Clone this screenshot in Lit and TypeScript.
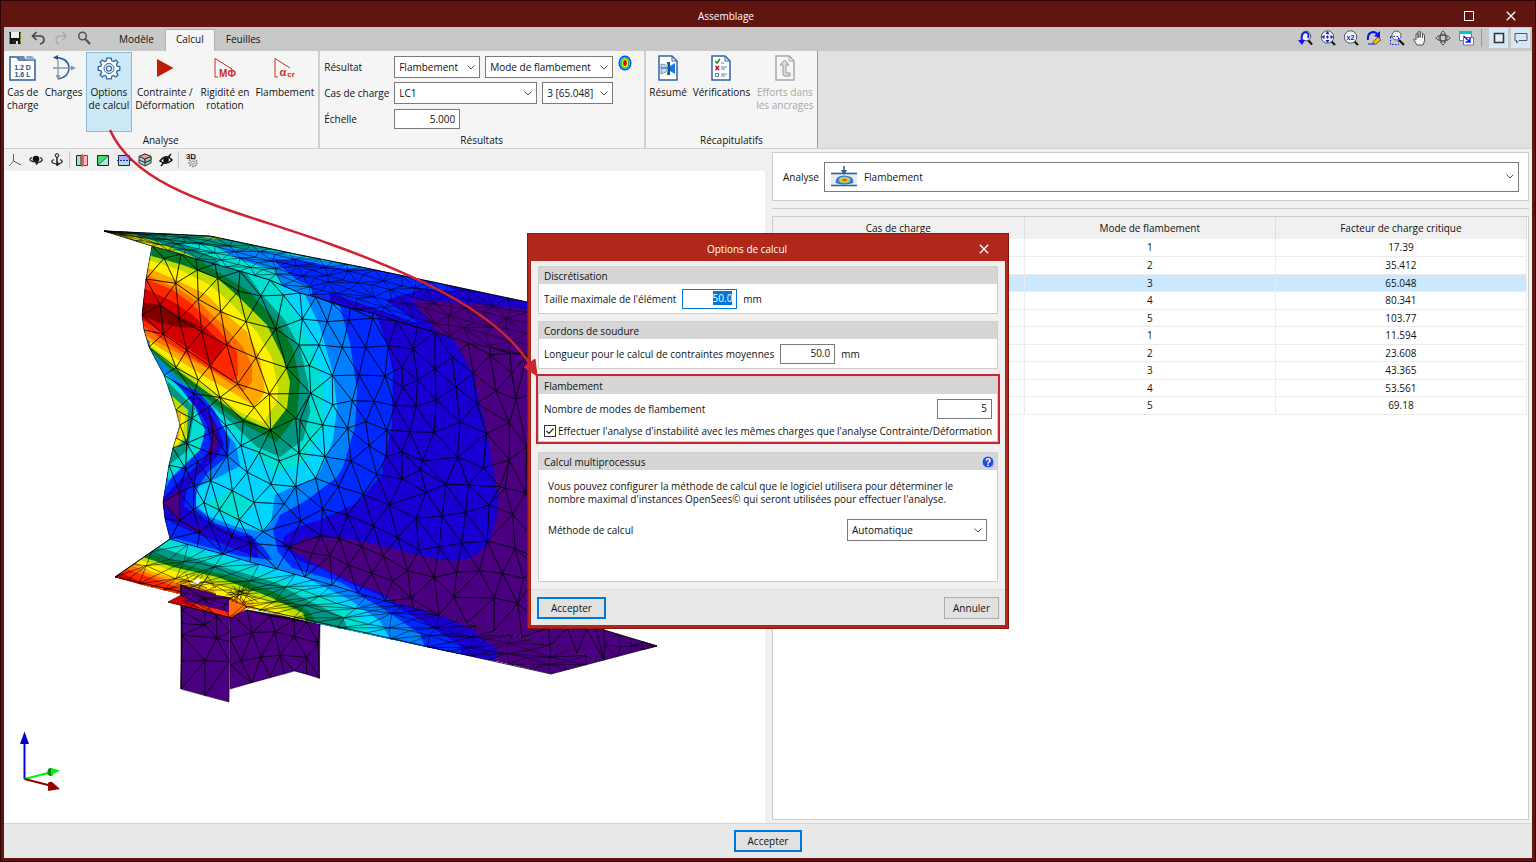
import { LitElement, html, svg, css } from "lit";
import { customElement, property } from "lit/decorators.js";
import { classMap } from "lit/directives/class-map.js";

type P = [number, number];

/* ---------- mesh geometry ---------- */

const C = {
  violet: "#4b0082", navy: "#1900d2", blue: "#0028ff", azure: "#0080ff", sky: "#00d4ff",
  turq: "#00e0d2", teal: "#009682", green: "#007828", lime: "#bedc00", yellow: "#fff000",
  amber: "#ffa800", orange: "#ff6e00", red: "#ff2800", crimson: "#d20000", maroon: "#820000",
};

/** Reads "x,y x,y ..." given in thirds of a unit from an origin. */
const patch = (ox: number, oy: number, s: string): P[] =>
  s.trim().split(/\s+/).map((t) => {
    const [x, y] = t.split(",").map(Number);
    return [ox + x / 3, oy + y / 3] as P;
  });
const pts = (s: string): P[] => s.trim().split(/\s+/).map((t) => t.split(",").map(Number) as P);

const inside = (x: number, y: number, poly: P[]) => {
  let hit = false;
  for (let i = 0, j = poly.length - 1; i < poly.length; j = i++) {
    const [xi, yi] = poly[i], [xj, yj] = poly[j];
    if (yi > y !== yj > y && x < ((xj - xi) * (y - yi)) / (yj - yi) + xi) hit = !hit;
  }
  return hit;
};

/** Delaunay triangulation (Bowyer-Watson), kept where the centroid lies in the outline. */
function triangulate(nodes: P[], outline: P[]): string {
  const p: P[] = [];
  for (const n of [...outline, ...nodes])
    if (!p.some((q) => Math.hypot(q[0] - n[0], q[1] - n[1]) < 4)) p.push(n);
  const n = p.length;
  p.push([-9000, -9000], [9000, -9000], [300, 18000]);
  const make = (a: number, b: number, c: number) => {
    const [ax, ay] = p[a], [bx, by] = p[b], [cx, cy] = p[c];
    const d = 2 * (ax * (by - cy) + bx * (cy - ay) + cx * (ay - by)) || 1e-9;
    const A = ax * ax + ay * ay, B = bx * bx + by * by, D = cx * cx + cy * cy;
    const x = (A * (by - cy) + B * (cy - ay) + D * (ay - by)) / d;
    const y = (A * (cx - bx) + B * (ax - cx) + D * (bx - ax)) / d;
    return { v: [a, b, c], x, y, r: (ax - x) ** 2 + (ay - y) ** 2 };
  };
  let tris = [make(n, n + 1, n + 2)];
  for (let i = 0; i < n; i++) {
    const edges = new Map<string, number[]>();
    tris = tris.filter((t) => {
      if ((p[i][0] - t.x) ** 2 + (p[i][1] - t.y) ** 2 >= t.r) return true;
      for (let k = 0; k < 3; k++) {
        const e = [t.v[k], t.v[(k + 1) % 3]].sort((u, w) => u - w);
        const key = e.join();
        if (edges.has(key)) edges.delete(key);
        else edges.set(key, e);
      }
      return false;
    });
    for (const [a, b] of edges.values()) tris.push(make(a, b, i));
  }
  let d = "";
  for (const t of tris) {
    if (t.v.some((v) => v >= n)) continue;
    const [a, b, c] = t.v.map((v) => p[v]);
    if (!inside((a[0] + b[0] + c[0]) / 3, (a[1] + b[1] + c[1]) / 3, outline)) continue;
    d += "M" + [a, b, c].map((q) => q[0].toFixed(1) + " " + q[1].toFixed(1)).join("L") + "Z";
  }
  return d;
}

/** Zigzag mesh between an upper and a lower polyline. */
function strip(top: P[], bottom: P[], rows: number, cols: number): string {
  const at = (line: P[], t: number): P => {
    const f = Math.min(t, 0.99999) * (line.length - 1), i = Math.floor(f), k = f - i;
    return [line[i][0] + (line[i + 1][0] - line[i][0]) * k, line[i][1] + (line[i + 1][1] - line[i][1]) * k];
  };
  const g: P[][] = [];
  for (let r = 0; r <= rows; r++) {
    const row: P[] = [];
    for (let c = 0; c <= cols; c++) {
      const wob = r > 0 && r < rows && c > 0 && c < cols ? Math.sin(c * 5.1 + r * 2.7) * 0.3 : 0;
      const t = Math.min(1, Math.max(0, (c + wob) / cols));
      const a = at(top, t), b = at(bottom, t), k = (r + wob * 0.5) / rows;
      row.push([a[0] + (b[0] - a[0]) * k, a[1] + (b[1] - a[1]) * k]);
    }
    g.push(row);
  }
  const seg = (a: P, b: P) => `M${a[0].toFixed(1)} ${a[1].toFixed(1)}L${b[0].toFixed(1)} ${b[1].toFixed(1)}`;
  let d = "";
  for (let r = 0; r < rows; r++)
    for (let c = 0; c < cols; c++) {
      d += seg(g[r][c], g[r][c + 1]) + seg(g[r][c], g[r + 1][c]);
      d += (r + c) % 2 ? seg(g[r][c], g[r + 1][c + 1]) : seg(g[r][c + 1], g[r + 1][c]);
    }
  return d;
}

const webTop = pts(`152,246 181,254 196,259 215,264 240,271 270,280 300,293 316,297 350,308 373,313 397,321 435,332 468,343 490,347 527,355 604,372`);
const webBottom = pts(`604,660 577,653 550,645 522,637 494,631 467,623 439,615 413,607 385,601 358,593 332,585 305,577 277,569 250,562 223,554 197,547 170,539`);
const webLeft = pts(`165,519 163,502 169,465 173,448 176,438 180,425 176,410 164,375 149,347 144,330 142,315 146,279`);
const web: P[] = [...webTop, ...webBottom, ...webLeft];

const webNodes: P[] = [
  ...patch(90, 215, `257,205 322,165 380,150 222,130 383,190 445,228 325,253 392,290 468,320 512,243 580,240 557,342 637,312 678,247
    712,320 210,270 268,312 220,357 335,350 410,390 290,405 360,452 498,428 590,458 627,390 687,390 658,452 538,537 443,507 662,535
    617,610 325,495 258,458 390,547 460,618 542,645 493,577 698,630 312,537 355,577 305,610 408,632 370,650 290,685 362,715 412,723
    453,692 508,712 627,715 568,738 323,740`),
  ...patch(300, 240, `8,237 80,243 147,240 218,235 97,190 57,317 127,322 197,322 265,317 340,327 352,262 405,285 457,352 505,315 570,345
    630,340 28,378 97,407 177,405 255,408 305,382 405,387 353,420 308,440 467,440 520,400 588,453 635,400 30,460 98,494 157,482 222,484
    285,497 348,498 408,480 530,490 648,477 67,555 143,565 198,545 260,570 330,575 403,577 480,547 560,580 628,548 0,540 30,597 75,650
    153,663 207,617 260,650 305,635 367,663 473,652 550,683 628,660 680,620 47,715 115,740 230,703 307,717 437,733 505,735 600,740`),
  ...patch(90, 450, `287,57 327,33 408,20 362,92 472,67 268,127 312,107 427,122 342,158 388,180 543,103 492,157 617,110 680,85 698,177
    583,162 567,33 626,12 705,20 785,33 862,73 820,133 897,165 772,195 850,228 448,210 360,223 330,245 270,212 310,180 425,260 518,245
    483,280 632,213 598,290 692,257 665,310 748,265 720,317 775,345 815,290 880,318 845,370`),
  ...patch(380, 470, `67,30 122,0 25,105 108,145 138,67 198,43 265,43 187,138 257,127 327,105 375,55 398,133 437,68 53,203 117,240 177,230
    245,220 322,213 405,235 10,258 83,302 163,322 230,307 298,302 367,310 430,325 38,333 93,385 222,382 343,384 413,400 0,440 505,475
    562,475 620,478 480,300 540,300 600,300`),
];

const webBands: [string, string][] = [
  [C.navy, "152,240 435,325 452,337 473,373 487,433 497,490 498,512 488,545 472,558 452,561 420,556 380,545 337,537 307,538 288,547 320,567 350,581 380,592 413,615 170,560 120,500 120,300"],
  [C.blue, "152,236 373,306 388,347 393,373 392,427 382,467 383,474 357,503 320,520 298,527 284,537 282,546 300,561 323,569 350,583 392,600 392,630 170,560 120,500 120,300"],
  [C.azure, "152,236 337,296 350,343 357,390 355,427 343,467 337,477 307,500 280,515 273,530 278,552 292,568 340,582 380,606 160,560 120,500 120,300"],
  [C.sky, "152,236 300,284 320,327 333,373 337,407 333,440 322,467 317,477 297,485 275,495 271,523 263,532 237,527 210,517 195,505 198,487 223,475 240,466 236,445 205,405 185,378 150,350"],
  [C.turq, "152,236 268,272 287,298 313,350 323,383 323,427 311,450 303,463 277,473 263,463 252,450 238,438 210,405 180,378 152,353"],
  [C.teal, "152,236 240,264 262,295 285,320 300,348 308,382 310,412 303,440 280,457 257,447 233,424 213,407 177,379 151,353"],
  [C.green, "152,240 196,258 223,275 250,292 277,322 293,348 300,382 297,415 277,442 243,424 213,403 180,378 150,350"],
  [C.lime, "148,255 183,265 217,278 240,298 267,325 283,358 290,382 287,408 270,430 243,418 207,392 173,367 150,348"],
  [C.yellow, "148,260 180,270 210,285 233,305 257,332 272,358 278,388 277,402 263,423 240,412 207,388 150,345"],
  [C.amber, "146,267 183,283 207,295 227,315 247,332 260,358 265,392 255,407 237,395 207,378 163,350 146,339"],
  [C.orange, "145,274 180,290 200,303 223,325 243,347 252,365 252,382 243,392 210,370 157,342 144,334"],
  [C.red, "144,278 173,290 193,305 217,328 237,352 238,375 233,382 207,367 163,340 142,325"],
  [C.crimson, "143,288 170,300 193,315 210,332 225,345 212,365 187,348 163,333 140,318"],
  [C.maroon, "142,302 160,305 177,315 202,328 178,327 160,323 140,315"],
  [C.blue, "164,375 186,387 197,390 214,410 230,440 228,456 208,472 196,490 196,508 215,523 250,535 264,548 272,560 240,556 170,537 163,518 160,500 170,480 194,456 204,440 196,412 184,394"],
  [C.navy, "165,377 184,395 200,398 214,420 224,444 216,458 197,476 187,490 184,506 205,520 240,536 252,536 257,546 258,558 220,543 190,531 165,519 161,500 180,480 200,464 211,446 206,422 196,406 182,398"],
  [C.violet, "208,415 215,425 218,444 213,453 206,457 211,442 212,428"],
  [C.violet, "162,502 180,489 179,521 205,532 200,534 180,522 177,518"],
  [C.azure, "262,532 266,535 282,568 276,568"],
  [C.turq, "205,505 230,489 253,503 237,521 220,514"],
  [C.turq, "164,372 182,390 195,407 205,430 200,450 186,463 168,480 168,440"],
  [C.teal, "168,382 184,398 195,408 190,438 188,450 168,466"],
  [C.lime, "172,396 188,410 187,438 176,448 168,450"],
  [C.yellow, "174,405 185,418 182,440 170,450"],
  [C.amber, "174,409 181,413 179,437 173,440"],
];

const flangeTop: P[] = [...pts(`104,231 210,236 300,255 366,268 433,282 527,302 604,318`), ...[...webTop].reverse()];
const topBands: [string, string][] = [
  [C.navy, "100,225 210,225 527,296 604,318 480,304 412,300 440,336 397,325 300,300 100,260"],
  [C.blue, "100,225 210,225 433,276 455,291 380,285 330,276 330,303 340,309 200,270 100,260"],
  [C.azure, "100,225 210,225 400,270 340,268 290,258 312,290 312,300 230,275 100,260"],
  [C.turq, "100,225 210,225 366,264 330,262 245,247 270,264 285,290 200,264 100,260"],
  [C.teal, "100,225 210,225 300,252 230,248 180,243 215,258 222,268 200,264 100,250"],
  [C.azure, "214,246 262,252 300,270 280,272 240,260"],
  [C.blue, "270,258 330,266 420,290 385,300 420,324 350,300 300,282"],
  [C.lime, "100,230 130,233 160,243 196,258 180,256 140,243 100,235"],
  [C.yellow, "104,231 140,239 175,253 152,248"],
  [C.lime, "195,233 222,236 222,239 205,238"],
];

const flangeBottomEdge: P[] = pts(`115,577 147,586 180,594 232,605 268,612 320,624 390,639 440,650 495,661 551,674`);
const flangeBottom: P[] = [...pts(`170,539`), ...flangeBottomEdge, ...pts(`604,660 657,646 604,630`), ...webBottom.slice(0)];
const flangeBands: [string, string][] = [
  [C.navy, "100,600 100,500 413,604 440,615 470,628 497,650 495,670"],
  [C.blue, "100,600 100,500 385,600 420,620 460,645 463,665"],
  [C.azure, "100,600 100,500 350,590 385,610 420,634 430,660"],
  [C.sky, "100,600 100,500 170,535 305,577 350,600 380,621 396,650"],
  [C.turq, "100,600 100,560 168,541 250,568 330,598 366,623 374,645"],
  [C.teal, "100,600 100,580 158,547 220,566 277,583 307,600 343,617 352,640"],
  [C.green, "100,600 100,585 149,553 190,566 233,577 277,593 310,612 321,632"],
  [C.lime, "100,600 100,590 143,557 173,567 217,577 270,597 303,613 309,630"],
  [C.yellow, "100,600 100,590 140,560 170,570 210,581 263,600 299,619 299,630"],
  [C.amber, "100,600 100,590 136,562 150,571 187,582 250,602 269,620"],
  [C.orange, "100,600 100,590 132,565 147,573 183,585 240,603 256,620"],
  [C.red, "100,600 100,590 127,569 140,574 180,588 184,604"],
  [C.crimson, "100,600 100,580 121,573 143,583 152,592"],
];

const column: P[] = pts(`181,585 230,598 229,702 181,689`);
const columnNodes = patch(90, 450, `345,445 275,480 345,525 420,545 275,555 275,633 345,632 418,635 345,737 380,500 380,565 420,575 275,520`);
const rib: P[] = patch(90, 450, `420,490 470,480 690,515 688,685 613,663 420,717`);
const ribNodes = patch(90, 450, `487,548 540,497 555,545 613,560 685,578 613,510 650,515 453,633 513,622 570,615 650,622 485,698 540,683
  583,672 420,565 420,645 650,672`);

const path = (p: P[]) => "M" + p.map((q) => q.join(" ")).join("L") + "Z";
const bands = (list: [string, string][]) => list.map(([f, p]) => svg`<polygon points=${p} fill=${f}/>`);

@customElement("mesh-view")
class MeshView extends LitElement {
  static styles = css`
    :host { display: block; min-height: 0; }
    svg { display: block; width: 100%; height: 100%; }
    .wire { fill: none; stroke: #000; stroke-width: 0.7; stroke-opacity: 0.75; }
    .edge { fill: none; stroke: #000; stroke-width: 0.8; }
    .fine { fill: none; stroke: #000; stroke-width: 0.5; }
  `;
  render() {
    return html`<svg viewBox="4 171 761 652" preserveAspectRatio="xMinYMin meet" role="img" aria-label="Mode de flambement">
      <defs>
        <clipPath id="web"><path d=${path(web)} /></clipPath>
        <clipPath id="top"><path d=${path(flangeTop)} /></clipPath>
        <clipPath id="bottom"><path d=${path(flangeBottom)} /></clipPath>
      </defs>
      <path d=${path(rib)} fill=${C.violet} />
      <path d=${triangulate(ribNodes, rib)} class="wire" />
      <g clip-path="url(#bottom)">
        <path d=${path(flangeBottom)} fill=${C.violet} />${bands(flangeBands)}
      </g>
      <path d=${strip([...webBottom].reverse(), flangeBottomEdge, 3, 24)} class="wire" />
      <path d=${strip(pts("604,630 657,646"), pts("604,660 657,646"), 2, 4)} class="wire" />
      <path d="M170 539L115 577L551 674L657 646L604 630" class="edge" />
      <g clip-path="url(#web)">
        <path d=${path(web)} fill=${C.violet} />${bands(webBands)}
      </g>
      <path d=${triangulate(webNodes, web)} class="wire" />
      <g clip-path="url(#top)">
        <path d=${path(flangeTop)} fill=${C.violet} />${bands(topBands)}
      </g>
      <path d=${strip(pts("104,231 210,236 300,255 366,268 433,282 527,302"), pts("104,231 181,254 249,273 316,297 435,332 527,355"), 5, 24)} class="wire" />
      <path d=${path(flangeTop)} class="edge" />
      <path d=${path(column)} fill=${C.violet} />
      <path d=${triangulate(columnNodes, column)} class="wire" />
      <polygon points="168,602 181,595 182,599 230,612 230,598 247,607 232,618" fill=${C.red} stroke="#000" stroke-width=".6" />
      <polygon points="168,602 180,596 186,598 200,609" fill=${C.crimson} />
      <polygon points="182,600 190,599 229,608 229,612" fill=${C.violet} />
      <polygon points="229,599 246,604 244,611 229,616" fill=${C.orange} />
      <path class="fine" d="M168 602L232 618L247 607M181 600L206 611M186 597L214 613M200 600L190 607M205 602L212 613M214 604L206 611M222 606L230 617M229 599L246 606M231 616L245 604M181 592L229 605M190 588L182 598M206 592L197 603M218 596L209 605" />
      <polygon points="190,584 195,580 202,579 198,584" fill="#fff" />
      <polygon points="215,590 221,590 230,593 230,597 216,595" fill=${C.yellow} />
      <path class="fine" d="M178 577L207 588M180 582L190 581M186 574L190 584M203 575L200 579M208 577L198 588M184 588L214 583M205 580L216 588M200 572L194 580M176 584L196 574M190 585L213 593M206 574L214 586M228 592L256 598M230 598L254 590M234 588L246 604M240 586L236 604M246 588L232 602M250 590L242 604M226 595L258 593M232 586L258 602M228 600L250 586M238 590L254 603M244 585L240 600M230 590L246 606M213 584L236 598M210 590L232 590" />
      <g fill="none" stroke-width="2">
        <path d="M24.500 779V742" stroke="#0000f0" />
        <path d="M24.500 779L50 772.500" stroke="#00f010" />
        <path d="M24.500 779L50 785.500" stroke="#900000" />
      </g>
      <path d="M24.500 731.500L29 744H20Z" fill="#0000c8" />
      <ellipse cx="50.500" cy="772" rx="3" ry="4" fill="#0a8a18" /><path d="M60 770.500L51 775.500V768Z" fill="#00f010" />
      <path d="M60 789L48 791V783Q50 781 52 782Z" fill="#900000" />
    </svg>`;
  }
}

/* ---------- icons ---------- */

const chevron = html`<svg class="chev" viewBox="0 0 8 5" aria-hidden="true"><path d="M.5 .5L4 4L7.500 .5" fill="none" stroke="#555" /></svg>`;
const ic = (w: number, h: number, body: unknown) =>
  html`<svg viewBox=${`0 0 ${w} ${h}`} width=${w} height=${h} aria-hidden="true">${body}</svg>`;

const icons = {
  save: ic(14, 14, svg`<path d="M1 1h12v12H2L1 12z" fill="#111"/><path d="M3 1h8v6H3z" fill="#eee"/><path d="M1.500 1.500v11M12.500 1.500v11" stroke="#8a8a2a"/><path d="M4 9h6v4H4z" fill="#222"/><path d="M8 10h2v3H8z" fill="#ddd"/>`),
  undo: ic(14, 14, svg`<path d="M5.500 1L1.500 5L5.500 9M1.500 5H9Q13 5 13 9Q13 12 9 13" fill="none" stroke="#444" stroke-width="1.600"/>`),
  redo: ic(14, 14, svg`<path d="M8.500 1L12.500 5L8.500 9M12.500 5H6Q2 5 2 9Q2 12 5 13" fill="none" stroke="#aaa" stroke-width="1.300"/>`),
  search: ic(14, 14, svg`<circle cx="5.500" cy="5" r="3.800" fill="none" stroke="#555" stroke-width="1.600"/><path d="M8.300 8L13 13" stroke="#555" stroke-width="2.200"/>`),
  cases: ic(27, 26, svg`<path d="M1 25V2H8L10 5H26V25Z" fill="#fff" stroke="#2f5f9a" stroke-width="1.500"/><path d="M8.500 1H15L17 5H10Z" fill="#6d87ae"/><path d="M17 1H23L26 4V5H18Z" fill="#9aaac6"/><text x="13.500" y="15" class="glyph" fill="#1d4f8c" font-size="7">1.2 D</text><text x="13.500" y="22" class="glyph" fill="#1d4f8c" font-size="7">1.6 L</text>`),
  loads: ic(26, 26, svg`<path d="M7 24Q18 22 18 13Q18 4 6 2.500" fill="none" stroke="#2f5f9a" stroke-width="1.500"/><path d="M2 2.500L7 0V5Z" fill="#1d4f8c"/><path d="M7 5V22M2 13H21" stroke="#8a97ab" stroke-width="1.300"/><path d="M7 25L4.500 20H9.500ZM25 13L20 10.500V15.500Z" fill="#8a97ab"/>`),
  gear: ic(24, 24, svg`<path d="M9.800 2.200h4.400l.6 2.700 1.600.7 2.400-1.500 2.100 2.100-1.500 2.400.7 1.600 2.700.6v3.400l-2.700.6-.7 1.600 1.500 2.400-2.100 2.100-2.400-1.500-1.600.7-.6 2.700H9.800l-.6-2.700-1.600-.7-2.400 1.500-2.100-2.100 1.500-2.400-.7-1.600-2.700-.6v-3.400l2.700-.6.7-1.600-1.500-2.400 2.100-2.100 2.400 1.500 1.600-.7z" fill="#fff" stroke="#2f66a4" stroke-width="1.300"/><circle cx="12" cy="12.500" r="5" fill="#dcebf7" stroke="#2f66a4"/><circle cx="12" cy="12.500" r="2.500" fill="#fff" stroke="#2f66a4" stroke-width="1.200"/>`),
  play: ic(18, 20, svg`<path d="M1 1L17.500 10L1 19Z" fill="#c01c08"/>`),
  rigid: ic(24, 22, svg`<path d="M2 20V1.500L19 12M2 20H5" fill="none" stroke="#c4321f"/><text x="14.500" y="20" class="glyph" fill="#c4321f" font-size="10">МФ</text>`),
  buckle: ic(24, 22, svg`<path d="M2 20V1.500L17 11M2 20H5" fill="none" stroke="#c4321f"/><text x="10" y="19" class="glyph" fill="#c4321f" font-size="11">α</text><text x="18" y="20" class="glyph" fill="#c4321f" font-size="8">cr</text>`),
  contour: ic(14, 16, svg`<ellipse cx="7" cy="8" rx="6.500" ry="7.500" fill="#1428ff"/><ellipse cx="7" cy="8" rx="5.300" ry="6.300" fill="#00d8e8"/><ellipse cx="7" cy="8" rx="4.200" ry="5.200" fill="#18d800"/><ellipse cx="7" cy="8" rx="3" ry="4.200" fill="#fff000"/><ellipse cx="7" cy="8" rx="1.800" ry="3" fill="#e80000"/>`),
  report: ic(20, 26, svg`<path d="M1 1H14L19 6V25H1Z" fill="#fff" stroke="#2f66a4" stroke-width="1.500"/><path d="M14 1V6H19" fill="none" stroke="#2f66a4"/><path d="M3 9L8 10L10 13L8 17L3 19Z" fill="#c8dcf0" stroke="#5f88b4" stroke-width=".8"/><path d="M9 7H12V20H9L10 13Z" fill="#1d4f8c"/><path d="M12 11L17 8V19L12 16Z" fill="#1478e0"/><path d="M3 13H12" stroke="#1d4f8c"/>`),
  checks: ic(20, 26, svg`<path d="M1 1H14L19 6V25H1Z" fill="#fff" stroke="#2f66a4" stroke-width="1.500"/><path d="M14 1V6H19" fill="none" stroke="#2f66a4"/><path d="M4 6L6 8L9 4" fill="none" stroke="#189018" stroke-width="1.500"/><path d="M4.500 11L8 15M8 11L4.500 15" stroke="#c01020" stroke-width="1.500"/><path d="M4.500 18.500H7.500V21.500H4.500Z" fill="none" stroke="#5a7fae"/><path d="M10 8H13M10 12H16M10 14H14M10 19H16M10 21H14" stroke="#5a7fae"/>`),
  anchors: ic(20, 26, svg`<path d="M1 1H14L19 6V25H1Z" fill="#f5f5f5" stroke="#a8a8a8" stroke-width="1.500"/><path d="M14 1V6H19" fill="none" stroke="#a8a8a8"/><path d="M8 20V10H5L9.500 5L14 10H11V18H15V21H9Z" fill="#ddd" stroke="#999"/>`),
  buckling: ic(26, 21, svg`<path d="M0 6H26V20H0Z" fill="#e4edf5"/><path d="M0 7.500H26M0 19.500H26" stroke="#2f5f8e" stroke-width="1.300"/><path d="M5 17Q4 14 7 11Q13 8 20 11Q23 14 22 17Q13 20 5 17Z" fill="#3f62e8"/><ellipse cx="13.500" cy="14" rx="6.500" ry="3.500" fill="#35c8d8"/><ellipse cx="13.500" cy="14" rx="5" ry="2.700" fill="#d8e020"/><ellipse cx="13.500" cy="14" rx="2.800" ry="1.600" fill="#f06010"/><path d="M13 0V6" stroke="#2f5f8e" stroke-width="1.500"/><path d="M10 4H16L13 9Z" fill="#2f5f8e"/>`),
  help: ic(14, 14, svg`<circle cx="7.500" cy="7.500" r="6" fill="#8c8c8c"/><circle cx="7" cy="7" r="6" fill="#1f50d8" stroke="#dfe8ff"/><text x="7" y="10.500" class="glyph" fill="#fff" font-size="10">?</text>`),
};

const lens = (body: unknown) => ic(16, 16, svg`<path d="M11 11L15 15" stroke="#111" stroke-width="2.200"/><circle cx="7.500" cy="7" r="6.200" fill="#f2f2f2" stroke="#555"/>${body}`);
const viewIcons: [string, unknown][] = [
  ["Vue précédente", ic(16, 16, svg`<path d="M11 10L15 14.500" stroke="#111" stroke-width="2.200"/><circle cx="9" cy="6" r="4.800" fill="#f2f2f2" stroke="#555"/><path d="M4.500 11Q4 2 9.500 2.500Q12.500 3.500 11 8" fill="none" stroke="#0a14f0" stroke-width="1.800"/><path d="M1 10H8L5 15Z" fill="#0a14f0"/>`)],
  ["Zoom étendu", lens(svg`<path d="M7.500 1L9.500 4H5.500ZM7.500 13L5.500 10H9.500ZM1.500 7L4.500 5V9ZM13.500 7L10.500 9V5Z" fill="#0a14f0"/><path d="M6 7H9M7.500 5.500V8.500" stroke="#0a14f0"/>`)],
  ["Zoom x2", lens(svg`<text x="7.500" y="10" class="glyph" fill="#0a14f0" font-size="7">x2</text>`)],
  ["Redessiner", ic(16, 16, svg`<path d="M2 10Q1 3 7 2Q10 2 12 5" fill="none" stroke="#0a14f0" stroke-width="2"/><path d="M14 1V8L8 6Z" fill="#0a14f0"/><path d="M2 14H9" stroke="#0a14f0"/><path d="M7 12L12 7L15 10L10 14L7 14Z" fill="#e8c020" stroke="#604010" stroke-width=".8"/>`)],
  ["Zoom fenêtre", ic(16, 16, svg`<path d="M10 10L15 15" stroke="#111" stroke-width="2.200"/><circle cx="7.500" cy="5.500" r="4.500" fill="#f2f2f2" stroke="#555"/><path d="M1.500 6.500H9.500V14.500H1.500Z" fill="none" stroke="#0a14f0" stroke-dasharray="1.500 1.500"/>`)],
  ["Panoramique", ic(16, 16, svg`<path d="M5 15L1.500 9.500Q2 8 4 10V4Q5 2.500 6 4V8V2Q7 .8 8.200 2V7.500V2.500Q9.500 1.300 10.500 3V8V4.500Q12 3.500 12.500 5V11L11 15Z" fill="#f4f4f4" stroke="#555"/>`)],
  ["Orbite", ic(16, 16, svg`<ellipse cx="8" cy="8" rx="5.500" ry="2.800" fill="none" stroke="#444"/><ellipse cx="8" cy="8" rx="2.800" ry="5.500" fill="none" stroke="#444"/><path d="M8 .8L10.500 4H5.500ZM8 15.200L5.500 12H10.500ZM.8 8L4 5.500V10.500ZM15.200 8L12 10.500V5.500Z" fill="#e6e6e6" stroke="#444" stroke-width=".9"/>`)],
  ["Fenêtres", ic(16, 16, svg`<path d="M1.500 1.500H13.500V10.500H1.500Z" fill="#fff" stroke="#777"/><path d="M1 1H14V4H1Z" fill="#10c0c8"/><path d="M5.500 7.500H15.500V15H5.500Z" fill="#fff" stroke="#777"/><path d="M5.500 6L11 11M12 7.500V12H7.500" fill="none" stroke="#0a14f0" stroke-width="1.500"/>`)],
];

const sceneIcons: [string, unknown][][] = [
  [
    ["Axes", ic(14, 14, svg`<path d="M5.500 1V8" stroke="#3a6a8a"/><path d="M5.500 8L1 13" stroke="#4a8a6a"/><path d="M5.500 8L13 12" stroke="#506070"/>`)],
    ["Rotation", ic(14, 14, svg`<circle cx="7" cy="6" r="3.300" fill="#111"/><path d="M3 4.500Q0 6 1.500 7.500Q3.500 9 7 9M11 4.500Q14.500 6 12.500 8Q11.500 9 9.500 9.500" fill="none" stroke="#222" stroke-width="1.200"/><path d="M6 7L10 9.500L7 12.500Z" fill="#222"/>`)],
    ["Rotation axe vertical", ic(14, 14, svg`<path d="M7 1V13" stroke="#111" stroke-width="1.400"/><circle cx="7" cy="2.500" r="1.800" fill="#f0f0f0" stroke="#111"/><path d="M4 6.500Q0 8 3 10Q7 12 11 10Q14 8 10 6.500" fill="none" stroke="#222" stroke-width="1.200"/><path d="M7 8.500L10 11L7 13Z" fill="#222"/>`)],
  ],
  [
    ["Coupe YZ", ic(14, 14, svg`<path d="M1.500 2.500H6V12.500H1.500Z" fill="#aadce6" stroke="#222"/><path d="M8 2.500H12.500V12.500H8Z" fill="#fbb" stroke="#d82020"/><path d="M7 1V14" stroke="#d82020"/>`)],
    ["Coupe XZ", ic(14, 14, svg`<path d="M1.500 12.500V2.500H12.500Z" fill="#40e070"/><path d="M1.500 12.500H12.500V2.500Z" fill="#a8e4e4"/><path d="M1.500 2.500H12.500V12.500H1.500Z" fill="none" stroke="#222"/><path d="M1.500 12.500L12.500 2.500" stroke="#20702a"/>`)],
    ["Coupe XY", ic(14, 14, svg`<path d="M1.500 2.500H12.500V12.500H1.500Z" fill="#a8dce6"/><path d="M1.500 2.500H12.500V7H1.500Z" fill="#b0aef4"/><path d="M1.500 2.500H12.500V12.500H1.500Z" fill="none" stroke="#223"/><path d="M0 7.500H14" stroke="#2020a0" stroke-dasharray="2 1"/>`)],
    ["Boîte", ic(14, 14, svg`<path d="M7 1L13 3.500V10L7 13L1 10V3.500Z" fill="#9fcfd2" stroke="#333"/><path d="M7 1L13 3.500L7 6L1 3.500Z" fill="#f0a0a0" stroke="#333"/><path d="M7 6V13M7 9.500L13 7M1 7L7 9.500" stroke="#333" fill="none"/><path d="M7 6L13 3.500V7L7 9.500Z" fill="#8fd89a" stroke="#333"/>`)],
    ["Masquer", ic(14, 14, svg`<path d="M1 8Q7 0 13 7Q7 13 1 8Z" fill="#fff" stroke="#111" stroke-width="1.600"/><circle cx="7" cy="7" r="2.800" fill="#111"/><path d="M2 13L12 1" stroke="#111" stroke-width="1.500"/>`)],
  ],
  [["Options 3D", ic(16, 16, svg`<circle cx="9" cy="10.500" r="3.800" fill="#eee" stroke="#888" stroke-width="1.800" stroke-dasharray="1.600 1"/><circle cx="9" cy="10.500" r="1.600" fill="#fff" stroke="#888"/><text x="7" y="7" class="glyph" fill="#222" font-size="8">3D</text>`)]],
];

/* ---------- data ---------- */

interface Tool { label: string; icon: unknown; active?: boolean; disabled?: boolean; }
const analysis: Tool[] = [
  { label: "Cas de\ncharge", icon: icons.cases },
  { label: "Charges", icon: icons.loads },
  { label: "Options\nde calcul", icon: icons.gear, active: true },
  { label: "Contrainte /\nDéformation", icon: icons.play },
  { label: "Rigidité en\nrotation", icon: icons.rigid },
  { label: "Flambement", icon: icons.buckle },
];
const summaries: Tool[] = [
  { label: "Résumé", icon: icons.report },
  { label: "Vérifications", icon: icons.checks },
  { label: "Efforts dans\nles ancrages", icon: icons.anchors, disabled: true },
];
const results = ["LC1", "LC2"].flatMap((lc, i) =>
  [["17.39", "35.412", "65.048", "80.341", "103.77"], ["11.594", "23.608", "43.365", "53.561", "69.18"]][i]
    .map((factor, k) => ({ lc, mode: k + 1, factor, selected: i === 0 && k === 2 })));

const base = css`
  :host, * { box-sizing: border-box; }
  button, input, select { font: inherit; color: inherit; margin: 0; }
  button { padding: 0; border: 0; background: none; }
  svg { display: block; }
  .glyph { text-anchor: middle; font-weight: 700; font-family: "Liberation Sans", sans-serif; }
  .btn { height: 22px; border: 1px solid #adadad; background: #e1e1e1; padding: 0 8px; }
  .btn.primary { border: 2px solid #0078d7; padding: 0 12px; }
  .combo { display: inline-grid; align-items: center; background: #fff; border: 1px solid #7a7a7a; height: 22px; }
  .combo > * { grid-area: 1 / 1; }
  .combo select { appearance: none; border: 0; outline: 0; background: transparent; width: 100%; height: 100%; padding: 0 16px 0 4px; }
  .chev { width: 8px; height: 5px; justify-self: end; margin-right: 4px; pointer-events: none; }
  .num { height: 20px; border: 1px solid #7a7a7a; background: #fff; text-align: right; padding: 0 4px 1px; outline: 0; border-radius: 0; }
`;
const combo = (id: string, cls: string, value: string) =>
  html`<span class="combo ${cls}"><select id=${id} aria-label=${id}><option>${value}</option></select>${chevron}</span>`;
const closeIcon = ic(10, 10, svg`<path d="M.8 .8L9.200 9.200M9.200 .8L.8 9.200" stroke="#fff" stroke-width="1.300"/>`);

/* ---------- dialog ---------- */

@customElement("options-dialog")
class OptionsDialog extends LitElement {
  static styles = [base, css`
    :host { display: flex; flex-direction: column; width: 482px; height: 396px; border: 4px solid #b0281c; outline: 1px solid #8e1410; outline-offset: -1px; background: #f0f0f0; }
    header { height: 24px; background: #b0281c; color: #fff; display: flex; align-items: center; flex: none; }
    h2 { flex: 1; margin: 0; font: inherit; text-align: center; }
    .close { width: 42px; height: 23px; display: grid; place-items: center; }
    .body { flex: 1; display: flex; flex-direction: column; gap: 7px; padding: 5px 7px 7px; }
    section { border: 1px solid #cfcfcf; background: #fff; }
    h3 { display: flex; justify-content: space-between; align-items: center; margin: 0; padding: 0 2px 0 5px; height: 17px; background: #d6d6d6; font: inherit; }
    .row { display: flex; align-items: center; gap: 6px; height: 29px; padding: 0 5px; }
    .row .num { width: 55px; }
    .row .grow { flex: 1; }
    #size { border-color: #0078d7; }
    #size::selection { background: #0078d7; color: #fff; }
    .marked { outline: 2px solid #cf2233; margin-bottom: 3px; padding-bottom: 2px; }
    .check { display: flex; align-items: center; gap: 2px; height: 16px; padding: 0 5px; white-space: nowrap; }
    .tick { display: grid; width: 12px; height: 12px; }
    .tick > * { grid-area: 1 / 1; }
    .tick input { appearance: none; margin: 0; border: 1px solid #333; background: #fff; width: 12px; height: 12px; }
    .tick svg { pointer-events: none; }
    .multi { flex: 1; }
    .multi p { margin: 10px 9px 0; line-height: 13px; }
    .method { display: flex; justify-content: space-between; align-items: center; margin: 13px 10px 0 9px; }
    .method .combo { width: 140px; }
    footer { height: 36px; border-top: 1px solid #dcdcdc; background: #e8e8e8; display: flex; justify-content: space-between; align-items: center; padding: 0 6px; }
  `];
  firstUpdated() {
    const size = this.renderRoot.querySelector<HTMLInputElement>("#size")!;
    size.focus();
    size.select();
  }
  render() {
    return html`
      <header><h2>Options de calcul</h2><button class="close" aria-label="Fermer">${closeIcon}</button></header>
      <div class="body">
        <section><h3>Discrétisation</h3>
          <div class="row"><label for="size">Taille maximale de l'élément</label><input id="size" class="num" .value=${"50.0"} /><span>mm</span></div>
        </section>
        <section><h3>Cordons de soudure</h3>
          <div class="row"><label for="length">Longueur pour le calcul de contraintes moyennes</label><input id="length" class="num" .value=${"50.0"} /><span>mm</span></div>
        </section>
        <section class="marked"><h3>Flambement</h3>
          <div class="row"><label for="modes" class="grow">Nombre de modes de flambement</label><input id="modes" class="num" .value=${"5"} /></div>
          <div class="check"><span class="tick"><input type="checkbox" id="same" checked />${ic(12, 12, svg`<path d="M2.500 6L5 8.500L9.500 3.500" fill="none" stroke="#222" stroke-width="1.200"/>`)}</span>
            <label for="same">Effectuer l'analyse d'instabilité avec les mêmes charges que l'analyse Contrainte/Déformation</label></div>
        </section>
        <section class="multi"><h3>Calcul multiprocessus ${icons.help}</h3>
          <p>Vous pouvez configurer la méthode de calcul que le logiciel utilisera pour déterminer le nombre maximal d'instances OpenSees© qui seront utilisées pour effectuer l'analyse.</p>
          <div class="method"><label for="method">Méthode de calcul</label>${combo("method", "", "Automatique")}</div>
        </section>
      </div>
      <footer><button class="btn primary">Accepter</button><button class="btn">Annuler</button></footer>`;
  }
}

/* ---------- ribbon group ---------- */

@customElement("tool-group")
class ToolGroup extends LitElement {
  @property({ attribute: false }) tools: Tool[] = [];
  static styles = [base, css`
    :host { display: flex; height: 80px; }
    button { display: flex; flex-direction: column; align-items: center; padding: 0 2px; border: 1px solid transparent; line-height: 13px; white-space: pre-line; }
    button:disabled { color: #a8a8a8; }
    .active { background: #cce8f6; border-color: #8abcd8; }
    .pic { height: 33px; padding-bottom: 3px; display: grid; place-items: center; }
  `];
  render() {
    return this.tools.map((t) => html`<button class=${classMap({ active: !!t.active })} ?disabled=${t.disabled}><span class="pic">${t.icon}</span><span>${t.label}</span></button>`);
  }
}

/* ---------- application ---------- */

@customElement("app-root")
class AppRoot extends LitElement {
  static styles = [base, css`
    :host { position: relative; display: flex; flex-direction: column; min-height: 100vh; border: 4px solid #601510; outline: 1px solid #2c0304; outline-offset: -1px; background: #f0f0f0; color: #111; font: 10px/14px "Open Sans", "Noto Sans", sans-serif; }
    .title { display: flex; align-items: center; height: 23px; background: #601510; color: #fff; }
    h1 { flex: 1; margin: 0; font: inherit; text-align: center; }
    .win { width: 42px; height: 23px; display: grid; place-items: center; }
    .tabs { display: flex; align-items: end; height: 24px; background: #c8c8c8; }
    .quick { display: flex; align-items: center; gap: 9px; height: 24px; padding: 0 17px 2px 4px; }
    .tab { height: 22px; padding: 0 10px 3px; border: 1px solid transparent; border-bottom: 0; }
    .tab.on { background: #f5f5f5; border-color: #b0b0b0; }
    .views { margin-left: auto; display: flex; align-items: center; gap: 7px; height: 24px; padding: 0 2px 2px 0; }
    .sep { width: 1px; height: 18px; background: #999; }
    .toggle { width: 19px; height: 20px; background: #d5e8f7; display: grid; place-items: center; }
    .toggle + .toggle { margin-left: -4px; }
    .ribbon { display: flex; height: 98px; background: #e1e1e1; border-bottom: 1px solid #d0d0d0; }
    .group { display: flex; flex-direction: column; justify-content: space-between; background: #f5f5f5; border-right: 2px solid #cfcfcf; padding: 1px 1px 1px 0; text-align: center; }
    .group:last-child { border-right: 1px solid #999; padding-right: 0; }
    .fields { display: grid; grid-template-columns: 70px auto; row-gap: 4px; padding: 4px 11px 0 4px; text-align: left; align-items: center; }
    .line { display: flex; gap: 5px; height: 22px; align-items: center; }
    .w86 { width: 86px; } .w128 { width: 128px; } .w142 { width: 143px; } .w70 { width: 71px; }
    .line .num { width: 66px; }
    .line > button { align-self: start; margin-top: -1px; }
    .work { flex: 1; display: flex; gap: 7px; min-height: 0; padding-right: 3px; }
    .scene { flex: 1 1 4px; display: flex; flex-direction: column; }
    .bar { display: flex; align-items: center; gap: 7px; height: 22px; padding-left: 4px; }
    .bar .sep { background: #c8c8c8; margin: 0 -2px; }
    mesh-view { flex: 1; background: #fff; }
    .side { flex: 1 1 0; display: flex; flex-direction: column; padding: 3px 0; }
    .pick { display: flex; align-items: center; gap: 5px; height: 49px; padding: 0 9px 0 10px; border: 1px solid #ccc; background: #fff; }
    .pick .combo { flex: 1; height: 30px; }
    .pick .combo > svg:first-child { margin-left: 6px; }
    .pick select { padding-left: 39px; }
    hr { width: 100%; margin: 7px 0; border: 0; border-top: 1px solid #ccc; }
    .list { flex: 1; border: 1px solid #ccc; background: #fff; padding-right: 1px; }
    table { width: 100%; border-collapse: collapse; table-layout: fixed; text-align: center; }
    th { height: 22px; padding: 0; font-weight: 400; background: #f0f0f0; border-right: 1px solid #ddd; }
    td { height: 17px; padding: 0; line-height: 16px; border-right: 1px solid #ececec; border-bottom: 1px solid #ececec; }
    tr:nth-child(even) td { height: 18px; }
    .sel td { background: #cce8ff; }
    .foot { height: 35px; border-top: 1px solid #d4d4d4; background: #e8e8e8; display: grid; place-items: center; }
    .over { position: absolute; inset: -4px; display: grid; place-items: center; }
    .callout { position: absolute; left: 96px; top: 120px; width: 450px; height: 260px; pointer-events: none; }
  `];
  render() {
    return html`
      <header class="title"><h1>Assemblage</h1>
        <button class="win" aria-label="Agrandir">${ic(10, 10, svg`<path d="M.5 .5H9.500V9.500H.5Z" fill="none" stroke="#fff"/>`)}</button>
        <button class="win" aria-label="Fermer">${closeIcon}</button></header>
      <nav class="tabs">
        <div class="quick">
          <button aria-label="Enregistrer">${icons.save}</button><button aria-label="Annuler">${icons.undo}</button>
          <button aria-label="Rétablir">${icons.redo}</button><button aria-label="Rechercher">${icons.search}</button></div>
        <button class="tab">Modèle</button><button class="tab on">Calcul</button><button class="tab">Feuilles</button>
        <div class="views">${viewIcons.map(([n, i]) => html`<button aria-label=${n}>${i}</button>`)}<span class="sep"></span>
          <button class="toggle" aria-label="Cadre">${ic(12, 12, svg`<path d="M1.500 1.500H10.500V10.500H1.500Z" fill="#e6eef5" stroke="#333" stroke-width="1.600"/>`)}</button>
          <button class="toggle" aria-label="Commentaires">${ic(14, 12, svg`<path d="M1 1.500H13V8.500H5L2.500 11V8.500H1Z" fill="none" stroke="#555"/>`)}</button></div>
      </nav>
      <div class="ribbon">
        <div class="group"><tool-group .tools=${analysis}></tool-group><span>Analyse</span></div>
        <div class="group">
          <div class="fields">
            <label for="Résultat">Résultat</label><div class="line">${combo("Résultat", "w86", "Flambement")}${combo("Mode", "w128", "Mode de flambement")}<button aria-label="Échelle de couleurs">${icons.contour}</button></div>
            <label for="Cas">Cas de charge</label><div class="line">${combo("Cas", "w142", "LC1")}${combo("Facteur", "w70", "3 [65.048]")}</div>
            <label for="scale">Échelle</label><div class="line"><input id="scale" class="num" .value=${"5.000"} /></div>
          </div><span>Résultats</span></div>
        <div class="group"><tool-group .tools=${summaries}></tool-group><span>Récapitulatifs</span></div>
      </div>
      <main class="work">
        <div class="scene">
          <div class="bar">${sceneIcons.map((g, k) => html`${k ? html`<span class="sep"></span>` : ""}${g.map(([n, i]) => html`<button aria-label=${n}>${i}</button>`)}`)}</div>
          <mesh-view></mesh-view>
        </div>
        <div class="side">
          <div class="pick"><label for="analysis">Analyse</label>
            <span class="combo">${icons.buckling}<select id="analysis"><option>Flambement</option></select>${chevron}</span></div>
          <hr />
          <div class="list"><table>
            <thead><tr><th>Cas de charge</th><th>Mode de flambement</th><th>Facteur de charge critique</th></tr></thead>
            <tbody>${results.map((r) => html`<tr class=${classMap({ sel: r.selected })}><td>${r.lc}</td><td>${r.mode}</td><td>${r.factor}</td></tr>`)}</tbody>
          </table></div>
        </div>
      </main>
      <footer class="foot"><button class="btn primary">Accepter</button></footer>
      <div class="over"><options-dialog role="dialog" aria-label="Options de calcul"></options-dialog></div>
      <svg class="callout" viewBox="100 124 450 260" aria-hidden="true">
        <path d="M110 130C138 192 230 208 330 244S500 316 531 366" fill="none" stroke="#cf2233" stroke-width="2.500" />
        <path d="M537 376L524 367L535 359Z" fill="#cf2233" stroke="#cf2233" />
      </svg>`;
  }
}
